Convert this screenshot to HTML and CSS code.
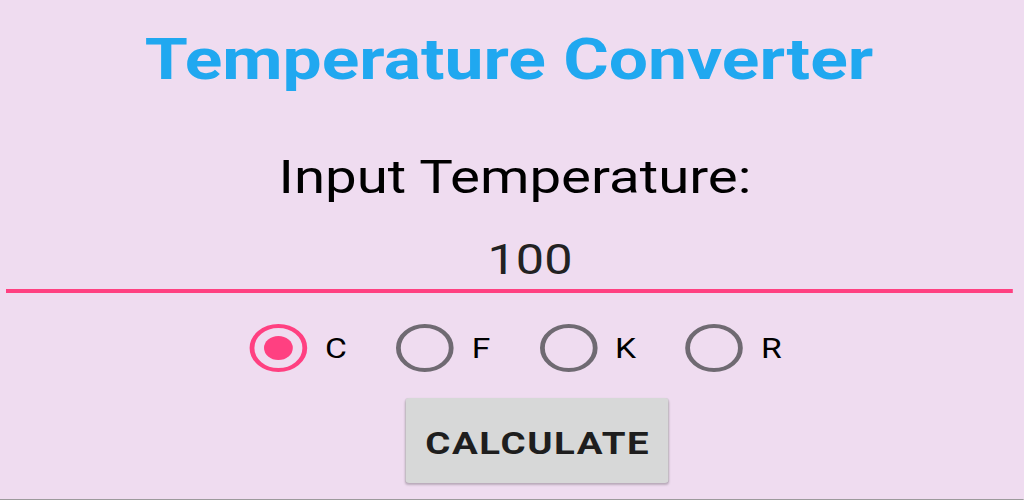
FILE: index.html
```html
<!DOCTYPE html>
<html>
<head>
<meta charset="utf-8">
<link rel="stylesheet" href="styles.css">
</head>
<body>
<div class="screen">
  <h1 class="title">Temperature Converter</h1>
  <div class="prompt">Input Temperature:</div>
  <div class="field">
    <div class="field-value">100</div>
  </div>
  <div class="radios">
    <label class="radio-item"><span class="radio checked"><span class="dot"></span></span><span class="radio-label">C</span></label>
    <label class="radio-item"><span class="radio"></span><span class="radio-label">F</span></label>
    <label class="radio-item"><span class="radio"></span><span class="radio-label">K</span></label>
    <label class="radio-item"><span class="radio"></span><span class="radio-label">R</span></label>
  </div>
  <div class="actions">
    <button class="btn">CALCULATE</button>
  </div>
</div>
</body>
</html>
```

FILE: styles.css
```css
html, body {
  margin: 0;
  padding: 0;
  background: #efdcf0;
  overflow: hidden;
}

.screen {
  width: 853.33px;
  height: 500px;
  box-sizing: border-box;
  border-bottom: 1px solid #9c9a9c;
  transform: scaleX(1.2);
  transform-origin: 0 0;
  font-family: Roboto, "Liberation Sans", sans-serif;
  display: flex;
  flex-direction: column;
  padding-top: 25px;
}

.title {
  margin: 0;
  font-size: 58px;
  line-height: 68px;
  font-weight: 700;
  color: #20a8f0;
  text-align: center;
  padding-right: 5px;
}

.prompt {
  margin-top: 56px;
  font-size: 47px;
  line-height: 56px;
  color: #000;
  text-align: center;
  padding-left: 5px;
}

.field {
  margin-top: 30px;
  margin-left: 5px;
  margin-right: 9px;
  border-bottom: 4px solid #ff4081;
  padding-bottom: 4px;
}

.field-value {
  font-size: 42px;
  line-height: 50px;
  color: #222;
  text-align: center;
  padding-left: 34px;
}

.radios {
  margin-top: 27px;
  height: 56px;
  display: flex;
  align-items: center;
  justify-content: center;
  gap: 41px;
  padding-left: 6px;
}

.radio-item {
  display: flex;
  align-items: center;
  gap: 15px;
}

.radio {
  width: 48px;
  height: 48px;
  box-sizing: border-box;
  border: 4px solid #6f6a72;
  border-radius: 50%;
  display: flex;
  align-items: center;
  justify-content: center;
}

.radio.checked {
  border-color: #ff4081;
}

.dot {
  width: 24px;
  height: 24px;
  border-radius: 50%;
  background: #ff4081;
}

.radio-label {
  font-size: 28px;
  color: #000;
}

.actions {
  margin-top: 22px;
  display: flex;
  justify-content: center;
  padding-left: 42px;
}

.btn {
  width: 219px;
  height: 85px;
  border: none;
  border-radius: 3px;
  background: #d7d8d8;
  box-shadow: 0 2px 2px rgba(0, 0, 0, 0.22), 0 0 1px rgba(0, 0, 0, 0.1);
  font-family: Roboto, "Liberation Sans", sans-serif;
  font-weight: 700;
  font-size: 32px;
  letter-spacing: 1.3px;
  color: #1e1e1e;
  padding: 5px 0 0 1px;
}
```
